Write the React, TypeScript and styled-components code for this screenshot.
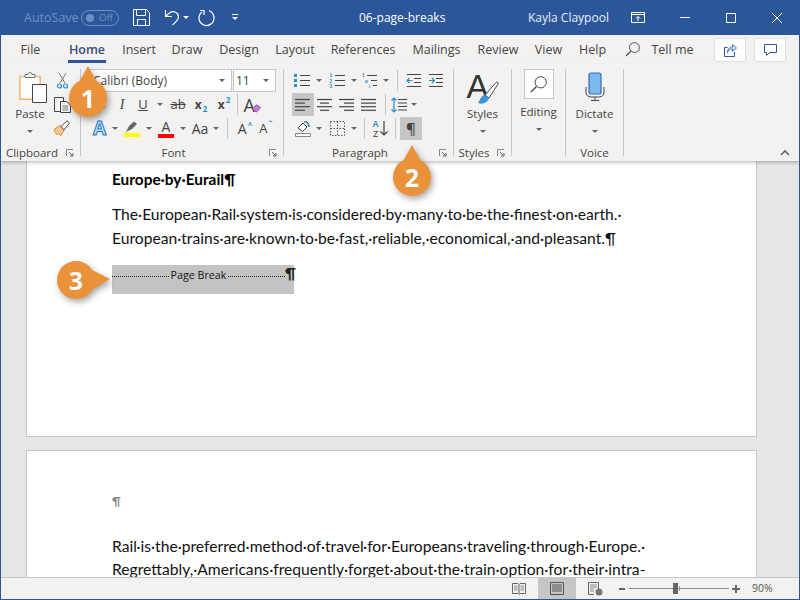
import React from "react";
import styled, { createGlobalStyle } from "styled-components";

const Global = createGlobalStyle`
  html, body { margin: 0; padding: 0; background: #e6e6e6; }
  #root { width: 800px; height: 600px; overflow: hidden; }
  * { box-sizing: border-box; }
`;

const UI = `"Open Sans", "Noto Sans", sans-serif`;
const BLUE = "#2b579a";
const ICON = "#444444";
const SKY = "#2a8dd4";

const Window = styled.div`
  position: relative; width: 800px; height: 600px; display: flex; flex-direction: column;
  border: 1px solid ${BLUE}; border-top: 0; font-family: ${UI}; color: #444; overflow: hidden;
`;
const TitleBar = styled.div`
  height: 35px; flex: none; background: ${BLUE}; display: flex; align-items: center; color: #fff; font-size: 12px;
`;
const Slot = styled.div<{ $w: number; $h?: number }>`
  flex: none; width: ${p => p.$w}px; height: ${p => (p.$h ? `${p.$h}px` : "auto")};
  display: flex; align-items: center; justify-content: center; white-space: nowrap; position: relative;
`;
const AutoSave = styled.span`
  flex: none; width: 80px; padding-left: 23px; font-size: 12.5px; color: #6f8fbf; white-space: nowrap;
`;
const Toggle = styled.span`
  flex: none; width: 38px; height: 16px; border: 1px solid #6f8fbf; border-radius: 8px; display: flex; align-items: center;
  padding-left: 4px; gap: 5px; font-size: 9.5px; color: #6f8fbf;
  &::before { content: ""; width: 8px; height: 8px; border-radius: 50%; background: #6f8fbf; }
`;
const DocTitle = styled.span`
  flex: none; width: 82px; text-align: center; white-space: nowrap; font-size: 12px; color: #fff;
`;
const UserName = styled(DocTitle)` width: 78px; color: #e8eef7; `;

const Tabs = styled.div`
  height: 29px; flex: none; background: #f3f2f1; display: flex; gap: 17px; padding-left: 20px; position: relative;
`;
const Tab = styled.div<{ $w: number; $active?: boolean; $after?: number; $before?: number }>`
  flex: none; width: ${p => p.$w}px; height: 28px; line-height: 30px; text-align: center; white-space: nowrap;
  font-size: 12.5px; color: ${p => (p.$active ? "#3a4f75" : "#444")}; font-weight: ${p => (p.$active ? 600 : 400)};
  display: flex; justify-content: center;
  margin-right: ${p => p.$after ?? 0}px; margin-left: ${p => p.$before ?? 0}px;
  border-bottom: 3px solid ${p => (p.$active ? BLUE : "transparent")};
`;
const TabActions = styled.div`
  display: flex; align-items: flex-start; margin-left: 0;
`;
const ShareButton = styled.div`
  flex: none; width: 32px; height: 24px; margin-top: 3px; background: #fff; border: 1px solid #e1dfdd; border-radius: 2px;
  display: flex; align-items: center; justify-content: center; margin-right: 8px;
`;

const Ribbon = styled.div`
  height: 97px; flex: none; background: #f3f2f1; display: flex; padding-top: 5px; padding-bottom: 5px;
  box-shadow: 0 2px 3px rgba(0,0,0,.22); position: relative; z-index: 2;
`;
const Group = styled.div<{ $w: number; $noBorder?: boolean }>`
  flex: none; width: ${p => p.$w}px; height: 87px; display: flex; flex-direction: column;
  border-right: ${p => (p.$noBorder ? "0" : "1px solid #c8c6c4")};
`;
const GroupBody = styled.div`
  flex: 1; min-height: 0; display: flex; flex-direction: column; gap: 1px;
`;
const LabelRow = styled.div`
  flex: none; height: 16px; display: flex; position: relative;
`;
const GroupLabel = styled.div`
  flex: 1; text-align: center; font-size: 11.5px; line-height: 14px; padding-top: 6px; color: #444; white-space: nowrap; height: 20px;
`;
const Launcher = styled.div`
  flex: none; width: 17px; padding-top: 9px; padding-left: 3px;
`;
const Row = styled.div`
  height: 23px; flex: none; display: flex; align-items: center;
`;
const Caret = styled.span`
  display: inline-block; width: 0; height: 0; border-left: 3px solid transparent; border-right: 3px solid transparent; border-top: 3px solid #666;
`;
const Active = styled(Slot)`
  background: #c6c6c6; height: 23px;
`;
const Sep = styled.span`
  display: block; width: 1px; height: 21px; background: #c8c6c4;
`;
const ClipColumn = styled.div`
  display: flex; height: 71px;
`;
const PasteButton = styled.div`
  flex: none; width: 50px; display: flex; flex-direction: column; align-items: center; padding-left: 8px; padding-top: 3px;
`;
const PasteArt = styled.div`
  margin-left: 6px; height: 31px;
`;
const LargeText = styled.div<{ $top?: number }>`
  font-size: 11.5px; line-height: 16px; color: #444; margin-top: ${p => p.$top ?? 0}px; margin-bottom: 8px; white-space: nowrap;
`;
const SmallStack = styled.div`
  flex: none; width: 22px; display: flex; flex-direction: column; align-items: center;
`;
const SmallCell = styled.div`
  height: 24px; display: flex; align-items: center; justify-content: center;
`;
const FontSelect = styled.div<{ $w: number }>`
  flex: none; width: ${p => p.$w}px; height: 23px; background: #fff; border: 1px solid #c6c6c6; display: flex; align-items: center;
  justify-content: space-between; padding: 0 6px 0 2px; font-size: 12px; color: #444; white-space: nowrap;
`;
const Glyph = styled.span<{ $size?: number; $weight?: number; $italic?: boolean; $color?: string; $under?: boolean; $strike?: boolean; $stroke?: string; $serif?: boolean }>`
  font-family: ${p => (p.$serif ? `"Liberation Serif", serif` : UI)};
  font-size: ${p => p.$size ?? 14}px; font-weight: ${p => p.$weight ?? 400}; font-style: ${p => (p.$italic ? "italic" : "normal")};
  color: ${p => p.$color ?? ICON}; line-height: 1; white-space: nowrap;
  text-decoration: ${p => (p.$under ? "underline" : p.$strike ? "line-through" : "none")};
  ${p => (p.$stroke ? `-webkit-text-stroke: 1px ${p.$stroke};` : "")}
`;
const Sub = styled.span<{ $sup?: boolean }>`
  font-size: 8px; font-weight: 700; color: ${SKY}; position: relative; top: ${p => (p.$sup ? -6 : 3)}px; margin-left: 1px;
`;
const ColorGlyph = styled.div`
  display: flex; flex-direction: column; align-items: center; width: 16px;
`;
const ColorBar = styled.span<{ $color: string }>`
  display: block; width: 16px; height: 4px; background: ${p => p.$color}; margin-top: 0;
`;
const SortStack = styled.div`
  display: flex; align-items: center; gap: 1px;
`;
const SortLetters = styled.div`
  display: flex; flex-direction: column; align-items: center; font-family: "Liberation Sans", sans-serif; font-size: 8.6px; line-height: 10px;
`;
const SortA = styled.span` color: ${SKY}; font-weight: 700; `;
const SortZ = styled.span` color: ${ICON}; font-weight: 400; `;
const LargeButton = styled.div<{ $top: number }>`
  flex: 1; display: flex; flex-direction: column; align-items: center; padding-top: ${p => p.$top}px;
`;
const StyleIcon = styled.div`
  position: relative; width: 32px; height: 33px;
`;
const BigA = styled.span`
  position: absolute; left: 0; top: -4px; font-size: 33px; line-height: 36px; font-weight: 400; color: #333; font-family: "Liberation Sans", sans-serif;
`;
const BrushOverlay = styled.svg`
  position: absolute; left: 7px; top: 7px;
`;
const ClearBox = styled.div`
  position: relative; width: 17px; height: 18px; display: flex; align-items: center;
`;
const ClearMark = styled.svg`
  position: absolute; left: 8px; top: 8px;
`;
const EditBox = styled.div`
  width: 30px; height: 30px; background: #fff; border: 1px solid #c6c6c6; display: flex; align-items: center; justify-content: center;
`;
const Collapse = styled.div`
  flex: 1; align-self: flex-end; display: flex; justify-content: flex-end; padding-right: 9px; padding-bottom: 0;
`;

const DocArea = styled.div`
  flex: 1; min-height: 0; overflow: hidden; background: #e6e6e6; padding-left: 25px;
`;
const Page = styled.div<{ $first?: boolean }>`
  width: 731px; background: #fff; border: 1px solid #c6c6c6; border-top-width: ${p => (p.$first ? 0 : 1)}px;
  height: ${p => (p.$first ? "276px" : "400px")}; padding-left: 85px; margin-bottom: 13px;
  padding-top: ${p => (p.$first ? 6 : 42)}px;
  font-family: Lato, Carlito, sans-serif; font-size: 15.65px; line-height: ${p => (p.$first ? "24px" : "23px")}; color: #111;
`;
const Heading = styled.div`
  font-weight: 700; white-space: nowrap; color: #000; font-size: 15.4px;
`;
const Para = styled.div<{ $top?: number }>`
  margin-top: ${p => p.$top ?? 0}px; white-space: nowrap;
`;
const PageBreak = styled.div`
  margin-top: 15px; width: 182px; height: 29px; background: #c3c3c3; display: flex; align-items: flex-start; padding-top: 1px;
`;
const BreakDots = styled.span`
  flex: 1; height: 1px; margin-top: 10px; border-top: 1px dotted #222;
`;
const BreakText = styled.span`
  flex: none; font-family: ${UI}; font-size: 10.7px; line-height: 19px; padding: 0 2px; color: #111;
`;
const Pilcrow = styled.span`
  flex: none; font-family: Lato, sans-serif; font-size: 15px; line-height: 15px; color: #222; width: 9px; font-weight: 700;
`;
const SmallMark = styled.div`
  font-size: 12px; line-height: 16px; color: #888; font-weight: 700; margin-bottom: 26px;
`;

const StatusBar = styled.div`
  height: 22px; flex: none; background: #f3f2f1; border-top: 1px solid #c6c6c6; display: flex; justify-content: flex-end; align-items: stretch;
  position: relative; z-index: 1;
`;
const StatusActive = styled(Slot)`
  background: #c6c6c6;
`;
const Track = styled.div`
  flex: none; width: 100px; position: relative; display: flex; align-items: center;
  &::before { content: ""; display: block; width: 100%; height: 1px; background: #8a8a8a; }
`;
const Thumb = styled.span`
  position: absolute; left: 44px; top: 5px; width: 5px; height: 11px; background: #666;
`;
const Tick = styled.span`
  position: absolute; left: 50px; top: 8px; width: 1px; height: 5px; background: #999;
`;
const Zoom = styled.span`
  flex: none; width: 46px; font-size: 10.5px; line-height: 21px; padding-left: 12px; color: #555;
`;

const CalloutBox = styled.div<{ $x: number; $y: number }>`
  position: absolute; left: ${p => p.$x}px; top: ${p => p.$y}px; width: 60px; height: 60px; z-index: 5;
  filter: drop-shadow(2px 3px 3px rgba(0,0,0,.35));
`;
const CalloutNum = styled.span<{ $dx: number; $dy: number }>`
  position: absolute; left: ${p => p.$dx}px; top: ${p => p.$dy}px; width: 38px; height: 38px; line-height: 38px; text-align: center;
  color: #fff; font-size: 25px; font-weight: 700; font-family: ${UI};
`;

const ORANGE = "#ea923a";

const Callout = ({ n, x, y, dir }: { n: string; x: number; y: number; dir: "up" | "right" }) => {
  const up = dir === "up";
  const cx = up ? 30 : 20;
  const cy = up ? 40 : 30;
  return (
    <CalloutBox $x={x - cx} $y={y - cy}>
      <svg width="60" height="60" viewBox="0 0 60 60">
        <circle cx={cx} cy={cy} r="19" fill={ORANGE} />
        {up ? <path d="M20 26 L30 8 L40 26 Z" fill={ORANGE} /> : <path d="M34 19 L54 29 L34 41 Z" fill={ORANGE} />}
      </svg>
      <CalloutNum $dx={cx - 19} $dy={cy - 19}>{n}</CalloutNum>
    </CalloutBox>
  );
};

const S = ({ w, h, children }: { w: number; h: number; children: React.ReactNode }) => (
  <svg width={w} height={h} viewBox={`0 0 ${w} ${h}`} fill="none" style={{ display: "block", overflow: "visible" }}>{children}</svg>
);

const Lines = ({ rows }: { rows: [number, number][] }) => (
  <S w={16} h={14}>
    {rows.map(([x, l], i) => <path key={i} d={`M${x} ${1.5 + i * 3.6}H${x + l}`} stroke={ICON} strokeWidth="1.2" />)}
  </S>
);

const SaveIcon = () => (
  <S w={17} h={17}>
    <path d="M.5.5H13.5L16.5 3.5V16.5H.5Z" stroke="#fff" />
    <path d="M3.5.5V6.5H12.5V.5M4.5 16.5V10.5H12.5V16.5" stroke="#fff" />
  </S>
);
const UndoIcon = () => (
  <S w={16} h={17}>
    <path d="M1.5 1V7.5H8" stroke="#fff" strokeWidth="1.2" />
    <path d="M2 7L6 3.5C9.5 1.5 14.5 3.5 14.5 8C14.5 11 12 13 8.5 16" stroke="#fff" strokeWidth="1.2" />
  </S>
);
const RedoIcon = () => (
  <S w={17} h={17}>
    <path d="M11 1.5C14 3 16 5.5 16 9A7.5 7.5 0 1 1 4 3" stroke="#fff" strokeWidth="1.2" />
    <path d="M1 1.5H5V6" stroke="#fff" strokeWidth="1.2" transform="translate(1 0)" />
  </S>
);
const QatIcon = () => (
  <S w={6} h={8}>
    <path d="M0 .5H6" stroke="#fff" />
    <path d="M0 3H6L3 6Z" fill="#fff" />
  </S>
);
const DisplayIcon = () => (
  <S w={14} h={11}>
    <path d="M.5.5H13.5V10.5H.5Z" stroke="#fff" />
    <path d="M.5 2.5H13.5" stroke="#fff" />
    <path d="M7 9V4.5M5 6.5L7 4.5L9 6.5" stroke="#fff" />
  </S>
);
const SearchIcon = ({ c = "#555", size = 15 }: { c?: string; size?: number }) => (
  <S w={size} h={size}>
    <circle cx={size * 0.63} cy={size * 0.37} r={size * 0.33} stroke={c} />
    <path d={`M${size * 0.38} ${size * 0.62}L1 ${size - 1}`} stroke={c} strokeWidth="1.3" />
  </S>
);
const ShareIcon = () => (
  <S w={13} h={13}>
    <path d="M3.5 3.5H.5V12.5H10.5V8" stroke={BLUE} />
    <path d="M3.5 9C4 6 6 5 8.5 5V7.5L12.5 4L8.5.5V3C5 3 3.5 5.5 3.5 9Z" fill="#cfe2f5" stroke={BLUE} strokeWidth=".8" />
  </S>
);
const CommentIcon = () => (
  <S w={13} h={12}>
    <path d="M.5.5H12.5V8.5H5.5L2.5 11.5V8.5H.5Z" stroke={BLUE} />
  </S>
);
const PasteIcon = () => (
  <S w={28} h={31}>
    <path d="M.8 4.5H21.2V27.2H.8Z" fill="#fff" stroke="#f0b878" strokeWidth="1.6" />
    <path d="M6 5.5V2.5H9A2 2 0 0 1 13 2.5H16V5.5H6Z" fill="#f3f2f1" stroke="#777" />
    <path d="M13.5 12.5H27.5V30.5H13.5Z" fill="#fff" stroke="#444" />
  </S>
);
const ScissorsIcon = () => (
  <S w={11} h={16}>
    <path d="M2 0L8 10M9 0L3 10" stroke="#777" />
    <circle cx="2.5" cy="13" r="2" stroke={SKY} strokeWidth="1.2" />
    <circle cx="8.5" cy="13" r="2" stroke={SKY} strokeWidth="1.2" />
  </S>
);
const CopyIcon = () => (
  <S w={17} h={16}>
    <path d="M.5.5H9.5V14.5H.5Z" stroke="#444" />
    <path d="M6.5 4.5H12.5L16.5 8V15.5H6.5Z" fill="#f3f2f1" stroke="#444" />
    <path d="M8.5 9H14M8.5 11H14M8.5 13H14" stroke="#777" />
  </S>
);
const PainterIcon = () => (
  <S w={16} h={16}>
    <path d="M.5 9L6 5.5L10 10L7 15.5L4.5 13.5L3 14.5L.5 11.5Z" fill="#f8c690" stroke="#e8892f" />
    <path d="M7 6.5L13 .8L15.5 3L10 10Z" fill="#fff" stroke="#444" />
  </S>
);
const Highlighter = () => (
  <S w={16} h={12}>
    <path d="M3 9L5 5L10 0.5L13 3L8 8L4 10Z" fill="#666" />
    <path d="M2 11L4 9" stroke="#666" />
  </S>
);
const Bullets = () => (
  <S w={16} h={14}>
    {[1, 6, 11].map(y => <rect key={y} x="0" y={y - 1} width="3" height="3" fill={SKY} />)}
    {[1.5, 6.5, 11.5].map(y => <path key={y} d={`M6 ${y}H16`} stroke={ICON} />)}
  </S>
);
const TINY = { fontSize: 4.8, fontWeight: 700, fontFamily: "Liberation Sans", fill: SKY };
const Numbers = () => (
  <S w={16} h={15}>
    {["1", "2", "3"].map((t, i) => <text key={t} x="0.5" y={4 + i * 5.5} {...TINY}>{t}</text>)}
    {[2.5, 7.5, 12.5].map(y => <path key={y} d={`M6 ${y}H16`} stroke={ICON} />)}
  </S>
);
const Multi = () => (
  <S w={16} h={15}>
    <text x="0" y="4" {...TINY}>1</text>
    <text x="3" y="9.5" {...TINY}>a</text>
    <text x="7" y="15" {...TINY}>i</text>
    <path d="M5 2.5H15M9 7.5H15M11 12.5H15" stroke={ICON} />
  </S>
);
const Indent = ({ flip }: { flip?: boolean }) => (
  <S w={15} h={13}>
    <path d="M1 .5H15M8 4.5H15M8 8.5H15M1 12.5H15" stroke={ICON} />
    {flip
      ? <path d="M1 6.5H6M4 4L6.5 6.5L4 9" stroke={SKY} strokeWidth="1.2" />
      : <path d="M1 6.5H6.5M3.5 4L1 6.5L3.5 9" stroke={SKY} strokeWidth="1.2" />}
  </S>
);
const LineSpacing = () => (
  <S w={16} h={16}>
    <path d="M3 1V15M.5 3.5L3 1L5.5 3.5M.5 12.5L3 15L5.5 12.5" stroke={SKY} strokeWidth="1.2" />
    <path d="M7 2.5H16M7 6H16M7 9.5H16M7 13H16" stroke={ICON} />
  </S>
);
const Shading = () => (
  <S w={16} h={16}>
    <path d="M3 7L8 2L12 6L7.5 10.5Z" fill="#fff" stroke="#444" />
    <path d="M9 1C12 0 14 3 14 6" stroke={SKY} strokeWidth="1.6" />
    <path d="M.5 12.5H15.5V15.5H.5Z" fill="#fff" stroke="#888" />
  </S>
);
const Borders = () => (
  <S w={15} h={15}>
    <path d="M.5.5H14.5V14.5H.5ZM7.5.5V14.5M.5 7.5H14.5" stroke="#555" strokeDasharray="1.5 1.5" />
  </S>
);
const SortArrow = () => (
  <S w={8} h={15}>
    <path d="M4 0V14M.5 10.5L4 14L7.5 10.5" stroke={ICON} strokeWidth="1.2" />
  </S>
);
const Mic = () => (
  <S w={20} h={29}>
    <rect x="4" y="1" width="12" height="21" rx="2" fill="#7db9ec" stroke="#2b6fb3" strokeWidth="1.2" />
    <path d="M1 15V20C1 23 3 25 6 25H14C17 25 19 23 19 20V15M10 25V28M6 28.5H14" stroke="#444" />
  </S>
);
const LauncherIcon = () => (
  <S w={8} h={8}>
    <path d="M.5 7V.5H7" stroke="#888" />
    <path d="M3 3L7 7M7 4V7H4" stroke="#666" />
  </S>
);
const Chevron = () => (
  <S w={10} h={6}>
    <path d="M1 5L5 1L9 5" stroke="#666" strokeWidth="1.6" />
  </S>
);
const BookIcon = () => (
  <S w={14} h={13}>
    <path d="M.5 1.5H6L7 2.5L8 1.5H13.5V11.5H8L7 12.5L6 11.5H.5ZM7 2.5V12" stroke="#666" />
    <path d="M2 4H5.5M2 6H5.5M2 8H5.5M8.5 4H12M8.5 6H12M8.5 8H12" stroke="#888" />
  </S>
);
const PrintIcon = () => (
  <S w={14} h={13}>
    <path d="M.5.5H13.5V12.5H.5Z" stroke="#555" />
    <path d="M2 3H12M2 5H12M2 7H12M2 9H12" stroke="#555" />
  </S>
);
const WebIcon = () => (
  <S w={15} h={14}>
    <path d="M.5.5H10.5V8M.5.5V12.5H6" stroke="#666" />
    <path d="M2 3H9M2 5H9M2 7H6M2 9H6" stroke="#888" />
    <circle cx="11" cy="10" r="3.5" fill="#777" />
  </S>
);

const StyleBrush = () => (
  <BrushOverlay width="26" height="27" viewBox="0 0 26 27" fill="none">
    <path d="M11 15L22 2.5C23 1.5 25 2.5 24 4L15 18Z" fill="#fff" stroke="#444" />
    <path d="M4 23C6 20 8 14 11 15L15 18C14 22 9 25 4 23Z" fill="#3e95d9" />
  </BrushOverlay>
);

export default function App() {
  return (
    <>
      <Global />
      <Window>
        <TitleBar>
          <AutoSave>AutoSave</AutoSave>
          <Toggle>Off</Toggle>
          <Slot $w={14} />
          <SaveIcon />
          <Slot $w={14} />
          <UndoIcon />
          <Slot $w={12}><Caret style={{ borderTopColor: "#fff" }} /></Slot>
          <Slot $w={6} />
          <RedoIcon />
          <Slot $w={17} />
          <QatIcon />
          <Slot $w={121} />
          <DocTitle>06-page-breaks</DocTitle>
          <Slot $w={87} />
          <UserName>Kayla Claypool</UserName>
          <Slot $w={25} />
          <DisplayIcon />
          <Slot $w={35} />
          <S w={10} h={2}><path d="M0 .5H10" stroke="#fff" /></S>
          <Slot $w={36} />
          <S w={10} h={10}><path d="M.5.5H9.5V9.5H.5Z" stroke="#fff" /></S>
          <Slot $w={36} />
          <S w={10} h={10}><path d="M0 0L10 10M10 0L0 10" stroke="#fff" /></S>
        </TitleBar>
        <Tabs>
          <Tab $w={19} $after={11}>File</Tab>
          <Tab $w={38} $active>Home</Tab>
          <Tab $w={32}>Insert</Tab>
          <Tab $w={30}>Draw</Tab>
          <Tab $w={40}>Design</Tab>
          <Tab $w={38}>Layout</Tab>
          <Tab $w={64}>References</Tab>
          <Tab $w={49}>Mailings</Tab>
          <Tab $w={40}>Review</Tab>
          <Tab $w={27}>View</Tab>
          <Tab $w={27} $after={2}>Help</Tab>
          <Slot $w={15} $h={28}><SearchIcon /></Slot>
          <Tab $w={43} $before={-6} $after={3}>Tell me</Tab>
          <TabActions>
            <ShareButton><ShareIcon /></ShareButton>
            <ShareButton><CommentIcon /></ShareButton>
          </TabActions>
        </Tabs>
        <Ribbon>
          <Group $w={80}>
            <GroupBody>
              <ClipColumn>
                <PasteButton>
                  <PasteArt><PasteIcon /></PasteArt>
                  <LargeText $top={3}>Paste</LargeText>
                  <Caret />
                </PasteButton>
                <SmallStack>
                  <SmallCell><ScissorsIcon /></SmallCell>
                  <SmallCell><CopyIcon /></SmallCell>
                  <SmallCell><PainterIcon /></SmallCell>
                </SmallStack>
              </ClipColumn>
            </GroupBody>
            <LabelRow><GroupLabel>Clipboard</GroupLabel><Launcher><LauncherIcon /></Launcher></LabelRow>
          </Group>
          <Group $w={203}>
            <GroupBody>
              <Row>
                <Slot $w={9} />
                <FontSelect $w={142}>Calibri (Body)<Caret /></FontSelect>
                <Slot $w={1} />
                <FontSelect $w={43}>11<Caret /></FontSelect>
              </Row>
              <Row>
                <Slot $w={9} />
                <Slot $w={22}><Glyph $weight={700} $size={13}>B</Glyph></Slot>
                <Slot $w={20}><Glyph $italic $size={14} $serif>I</Glyph></Slot>
                <Slot $w={22}><Glyph $under $size={13}>U</Glyph></Slot>
                <Slot $w={12}><Caret /></Slot>
                <Slot $w={24}><Glyph $strike $size={13}>ab</Glyph></Slot>
                <Slot $w={22}><Glyph $weight={700} $size={12}>x<Sub>2</Sub></Glyph></Slot>
                <Slot $w={24}><Glyph $weight={700} $size={12}>x<Sub $sup>2</Sub></Glyph></Slot>
                <Slot $w={3}><Sep /></Slot>
                <Slot $w={26}>
                  <ClearBox>
                    <Glyph $size={18}>A</Glyph>
                    <ClearMark width="9" height="9" viewBox="0 0 9 9" fill="none">
                      <path d="M.5 5L4.5.8L8.5 3.5L4.5 8Z" fill="#c77fd0" stroke="#9a3fa8" />
                    </ClearMark>
                  </ClearBox>
                </Slot>
              </Row>
              <Row>
                <Slot $w={7} />
                <Slot $w={23}><Glyph $weight={700} $size={19} $color="#bfe0f7" $stroke="#1f78c8">A</Glyph></Slot>
                <Slot $w={8}><Caret /></Slot>
                <Slot $w={26}>
                  <ColorGlyph><Highlighter /><ColorBar $color="#ffff00" /></ColorGlyph>
                </Slot>
                <Slot $w={8}><Caret /></Slot>
                <Slot $w={26}>
                  <ColorGlyph><Glyph $size={14}>A</Glyph><ColorBar $color="#ff0000" /></ColorGlyph>
                </Slot>
                <Slot $w={8}><Caret /></Slot>
                <Slot $w={26}><Glyph $size={14}>Aa</Glyph></Slot>
                <Slot $w={6}><Caret /></Slot>
                <Slot $w={16}><Sep /></Slot>
                <Slot $w={20}><Glyph $size={14}>A<Sub $sup>^</Sub></Glyph></Slot>
                <Slot $w={22}><Glyph $size={13}>A<Sub $sup>ˇ</Sub></Glyph></Slot>
              </Row>
            </GroupBody>
            <LabelRow><GroupLabel>Font</GroupLabel><Launcher><LauncherIcon /></Launcher></LabelRow>
          </Group>
          <Group $w={170}>
            <GroupBody>
              <Row>
                <Slot $w={6} />
                <Slot $w={24}><Bullets /></Slot>
                <Slot $w={10}><Caret /></Slot>
                <Slot $w={26}><Numbers /></Slot>
                <Slot $w={8}><Caret /></Slot>
                <Slot $w={24}><Multi /></Slot>
                <Slot $w={8}><Caret /></Slot>
                <Slot $w={14}><Sep /></Slot>
                <Slot $w={18}><Indent /></Slot>
                <Slot $w={26}><Indent flip /></Slot>
              </Row>
              <Row>
                <Slot $w={8} />
                <Active $w={22}><Lines rows={[[0, 15], [0, 10], [0, 15], [0, 10]]} /></Active>
                <Slot $w={22}><Lines rows={[[0, 15], [3, 9], [0, 15], [3, 9]]} /></Slot>
                <Slot $w={22}><Lines rows={[[0, 15], [5, 10], [0, 15], [5, 10]]} /></Slot>
                <Slot $w={22}><Lines rows={[[0, 15], [0, 15], [0, 15], [0, 15]]} /></Slot>
                <Slot $w={10}><Sep /></Slot>
                <Slot $w={18}><LineSpacing /></Slot>
                <Slot $w={12}><Caret /></Slot>
              </Row>
              <Row>
                <Slot $w={8} />
                <Slot $w={22}><Shading /></Slot>
                <Slot $w={10}><Caret /></Slot>
                <Slot $w={26}><Borders /></Slot>
                <Slot $w={8}><Caret /></Slot>
                <Slot $w={12}><Sep /></Slot>
                <Slot $w={20}>
                  <SortStack>
                    <SortLetters><SortA>A</SortA><SortZ>Z</SortZ></SortLetters>
                    <SortArrow />
                  </SortStack>
                </Slot>
                <Slot $w={10}><Sep /></Slot>
                <Active $w={22}><Glyph $size={15} $color="#444" $weight={600}>¶</Glyph></Active>
              </Row>
            </GroupBody>
            <LabelRow><GroupLabel>Paragraph</GroupLabel><Launcher><LauncherIcon /></Launcher></LabelRow>
          </Group>
          <Group $w={58}>
            <LargeButton $top={4}>
              <StyleIcon><BigA>A</BigA><StyleBrush /></StyleIcon>
              <LargeText $top={0}>Styles</LargeText>
              <Caret />
            </LargeButton>
            <LabelRow><GroupLabel>Styles</GroupLabel><Launcher><LauncherIcon /></Launcher></LabelRow>
          </Group>
          <Group $w={54}>
            <LargeButton $top={0}>
              <EditBox><SearchIcon size={17} c="#444" /></EditBox>
              <LargeText $top={5}>Editing</LargeText>
              <Caret />
            </LargeButton>
            <LabelRow />
          </Group>
          <Group $w={58}>
            <LargeButton $top={3}>
              <Mic />
              <LargeText $top={5}>Dictate</LargeText>
              <Caret />
            </LargeButton>
            <LabelRow><GroupLabel>Voice</GroupLabel></LabelRow>
          </Group>
          <Collapse><Chevron /></Collapse>
        </Ribbon>
        <DocArea>
          <Page $first>
            <Heading>Europe·by·Eurail¶</Heading>
            <Para $top={11}>The·European·Rail·system·is·considered·by·many·to·be·the·finest·on·earth.·</Para>
            <Para>European·trains·are·known·to·be·fast,·reliable,·economical,·and·pleasant.¶</Para>
            <PageBreak>
              <BreakDots />
              <BreakText>Page Break</BreakText>
              <BreakDots />
              <Pilcrow>¶</Pilcrow>
            </PageBreak>
          </Page>
          <Page>
            <SmallMark>¶</SmallMark>
            <Para $top={0}>Rail·is·the·preferred·method·of·travel·for·Europeans·traveling·through·Europe.·</Para>
            <Para>Regrettably,·Americans·frequently·forget·about·the·train·option·for·their·intra-</Para>
          </Page>
        </DocArea>
        <StatusBar>
          <Slot $w={14}><BookIcon /></Slot>
          <Slot $w={12} />
          <StatusActive $w={38}><PrintIcon /></StatusActive>
          <Slot $w={12} />
          <Slot $w={14}><WebIcon /></Slot>
          <Slot $w={17} />
          <Slot $w={6}><S w={6} h={2}><path d="M0 1H6" stroke="#666" strokeWidth="2" /></S></Slot>
          <Slot $w={4} />
          <Track><Thumb /><Tick /></Track>
          <Slot $w={3} />
          <Slot $w={8}><S w={8} h={8}><path d="M0 4H8M4 0V8" stroke="#666" strokeWidth="2" /></S></Slot>
          <Zoom>90%</Zoom>
          <Slot $w={13} />
        </StatusBar>
        <Callout n="1" x={87} y={98} dir="up" />
        <Callout n="2" x={411} y={177} dir="up" />
        <Callout n="3" x={75} y={280} dir="right" />
      </Window>
    </>
  );
}
